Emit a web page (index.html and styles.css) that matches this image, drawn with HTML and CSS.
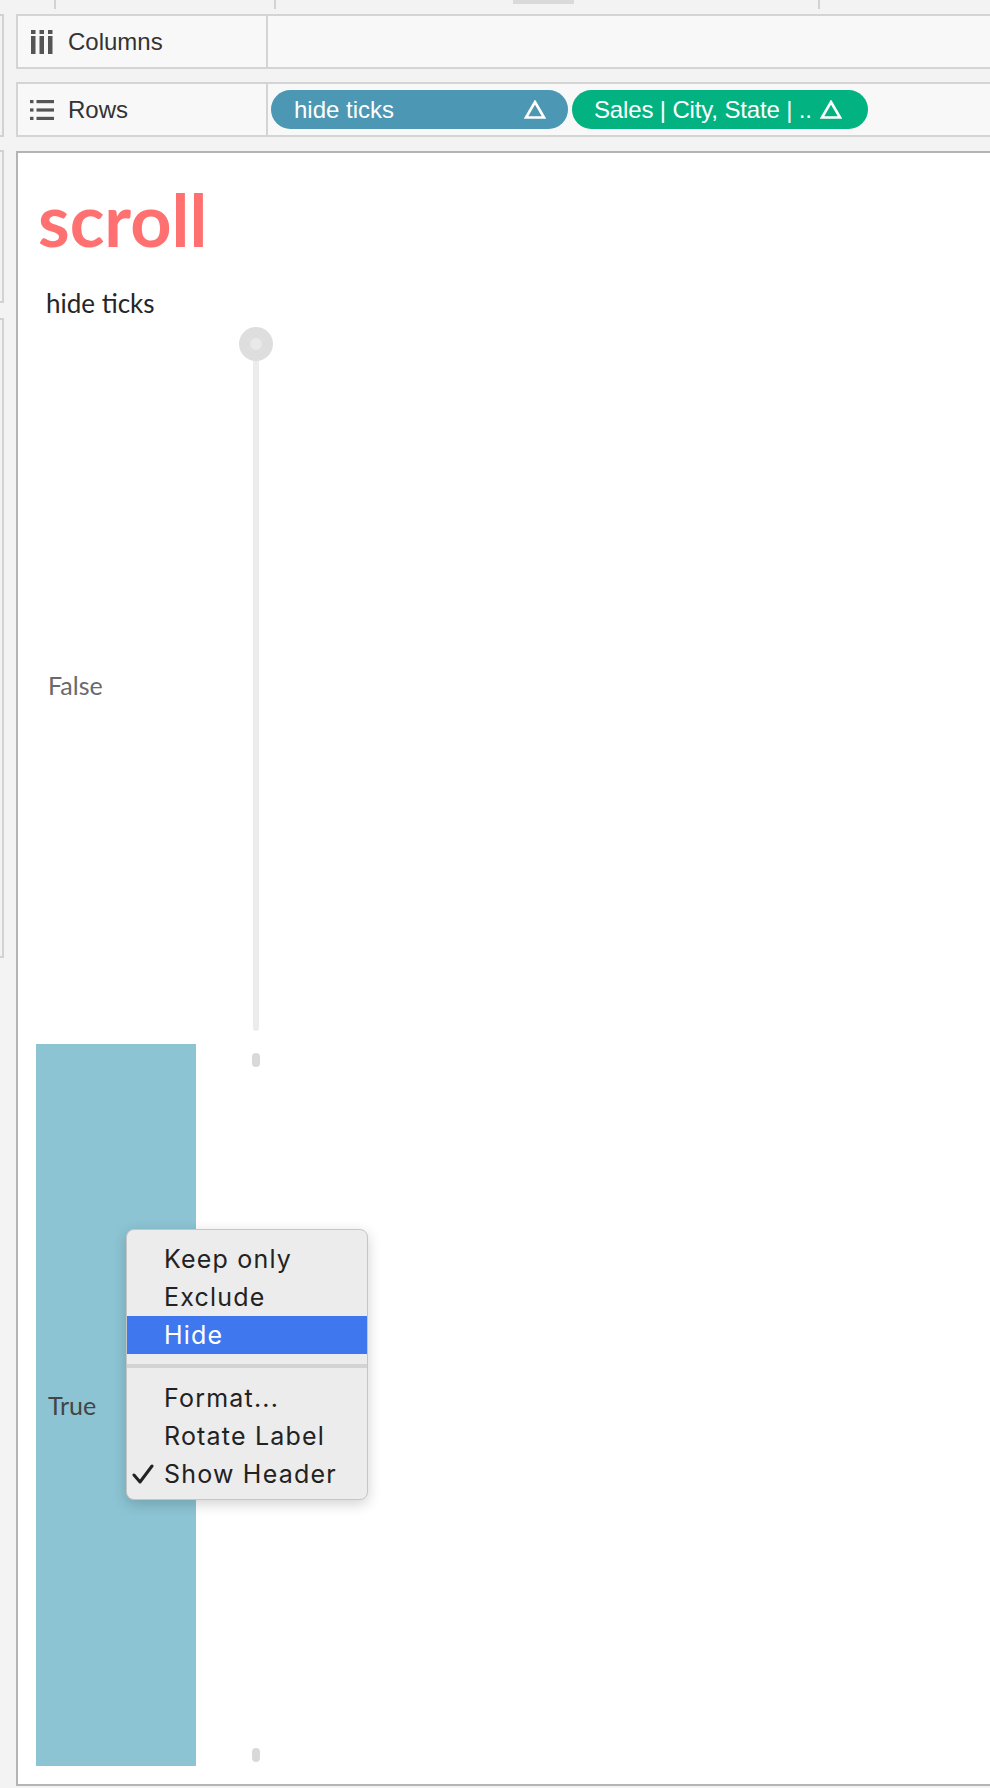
FILE: index.html
```html
<!DOCTYPE html>
<html lang="en">
<head>
<meta charset="utf-8">
<title>Sheet - scroll</title>
<link rel="stylesheet" href="styles.css">
</head>
<body>
<div class="tabstrip">
  <div class="seg seg-a"></div>
  <div class="seg seg-b"></div>
  <div class="seg seg-c"><div class="grip"></div></div>
</div>
<div class="workspace">
  <div class="sidestrip">
    <div class="sidebox box1"></div>
    <div class="sidebox box2"></div>
    <div class="sidebox box3"></div>
  </div>
  <main class="main">
    <div class="shelf">
      <div class="shelf-label">
        <span class="shelf-icon">
          <svg width="22" height="24" viewBox="0 0 22 24"><g fill="#555"><rect x="0" y="0" width="4.5" height="4"/><rect x="0" y="6" width="4.5" height="18"/><rect x="8.5" y="0" width="4.5" height="4"/><rect x="8.5" y="6" width="4.5" height="18"/><rect x="17" y="0" width="4.5" height="4"/><rect x="17" y="6" width="4.5" height="18"/></g></svg>
        </span>
        <span class="shelf-name">Columns</span>
      </div>
      <div class="shelf-pills"></div>
    </div>
    <div class="shelf rows-shelf">
      <div class="shelf-label">
        <span class="shelf-icon">
          <svg width="24" height="20" viewBox="0 0 24 20"><g fill="#555"><rect x="0" y="0" width="3.5" height="3.2"/><rect x="6.5" y="0" width="17.5" height="3.2"/><rect x="0" y="8.4" width="3.5" height="3.2"/><rect x="6.5" y="8.4" width="17.5" height="3.2"/><rect x="0" y="16.8" width="3.5" height="3.2"/><rect x="6.5" y="16.8" width="17.5" height="3.2"/></g></svg>
        </span>
        <span class="shelf-name">Rows</span>
      </div>
      <div class="shelf-pills">
        <div class="pill pill-dim">
          <span class="pill-text">hide ticks</span>
          <svg class="delta" width="22" height="19" viewBox="0 0 22 19"><path d="M11 2 L20 17.5 L2 17.5 Z" fill="none" stroke="#fff" stroke-width="2.6" stroke-linejoin="miter"/></svg>
        </div>
        <div class="pill pill-measure">
          <span class="pill-text">Sales | City, State | ..</span>
          <svg class="delta" width="22" height="19" viewBox="0 0 22 19"><path d="M11 2 L20 17.5 L2 17.5 Z" fill="none" stroke="#fff" stroke-width="2.6" stroke-linejoin="miter"/></svg>
        </div>
      </div>
    </div>
    <section class="view">
      <h1 class="title">scroll</h1>
      <div class="field-header">hide ticks</div>
      <div class="chart">
        <div class="row-header row-false"><span>False</span></div>
        <div class="marks marks-false">
          <div class="knob"><div class="knob-core"></div></div>
          <div class="track"></div>
        </div>
        <div class="row-header row-true selected"><span>True</span></div>
        <div class="marks marks-true">
          <div class="tick"></div>
          <div class="tick"></div>
        </div>
      </div>
    </section>
  </main>
</div>
<div class="context-menu">
  <div class="menu-item"><span class="check"></span>Keep only</div>
  <div class="menu-item"><span class="check"></span>Exclude</div>
  <div class="menu-item active"><span class="check"></span>Hide</div>
  <div class="menu-sep"></div>
  <div class="menu-item"><span class="check"></span>Format...</div>
  <div class="menu-item"><span class="check"></span>Rotate Label</div>
  <div class="menu-item"><span class="check"><svg width="22" height="20" viewBox="0 0 22 20"><path d="M2 11 L8 18 L20 2" fill="none" stroke="#222" stroke-width="3" stroke-linecap="round" stroke-linejoin="round"/></svg></span>Show Header</div>
</div>
</body>
</html>
```
FILE: styles.css
```css
* { box-sizing: border-box; }
html, body { margin: 0; padding: 0; }
body {
  width: 990px;
  height: 1788px;
  overflow: hidden;
  background: #f3f3f3;
  font-family: "Liberation Sans", Arial, sans-serif;
  color: #333;
  position: relative;
}

/* top tab strip */
.tabstrip { display: flex; height: 14px; }
.seg { height: 9px; border-right: 2px solid #d2d2d2; }
.seg-a { width: 56px; }
.seg-b { width: 220px; }
.seg-c { width: 544px; }
.grip { margin-left: 237px; width: 61px; height: 4px; background: #dadada; }

.workspace { display: flex; }

/* left panel edge */
.sidestrip { width: 4px; margin-right: 12px; display: flex; flex-direction: column; flex: none; }
.sidebox { border: 2px solid #d2d2d2; border-left: none; }
.box1 { height: 123px; }
.box2 { margin-top: 13px; height: 153px; }
.box3 { margin-top: 15px; height: 640px; }

.main { flex: 1; display: flex; flex-direction: column; }

/* shelves */
.shelf {
  display: flex;
  height: 55px;
  border: 2px solid #d4d4d4;
  border-right: none;
  background: #f8f8f8;
}
.rows-shelf { margin-top: 13px; }
.shelf-label {
  width: 250px;
  flex: none;
  display: flex;
  align-items: center;
  padding-left: 12px;
  border-right: 2px solid #d4d4d4;
}
.shelf-icon { width: 24px; display: flex; justify-content: center; align-items: center; margin-right: 14px; }
.shelf-name { font-size: 24px; color: #333; }
.shelf-pills { display: flex; align-items: center; gap: 4px; padding-left: 3px; }

.pill {
  height: 39px;
  width: 297px;
  border-radius: 20px;
  display: flex;
  align-items: center;
  color: #fff;
  font-size: 24px;
  white-space: nowrap;
  padding: 0 22px 0 23px;
}
.pill-dim { background: #4b97b4; justify-content: space-between; }
.pill-measure { background: #02b281; width: 296px; padding-left: 22px; letter-spacing: -0.15px; }
.pill-measure .delta { margin-left: 8px; }
.delta { flex: none; }

/* view */
.view {
  margin-top: 14px;
  height: 1635px;
  border: 2px solid #b4b4b4;
  border-right: none;
  background: #fff;
  padding-left: 20px;
}
.title {
  margin: 0;
  font-family: Lato, "Liberation Sans", sans-serif;
  font-weight: 700;
  font-size: 72px;
  line-height: 72px;
  color: #ff7070;
  padding-top: 30px;
  height: 135px;
}
.field-header {
  font-family: Lato, "Liberation Sans", sans-serif;
  font-size: 26px;
  color: #262626;
  line-height: 30px;
  padding-left: 8px;
  height: 37px;
}
.chart {
  display: grid;
  grid-template-columns: 160px 120px;
  grid-template-rows: 719px 722px;
  margin-left: -2px;
}
.row-header {
  display: flex;
  align-items: center;
  padding-left: 12px;
  font-family: Lato, "Liberation Sans", sans-serif;
  font-size: 25px;
  color: #6a6a6a;
}
.row-true { color: #444; }
.selected { background: #8cc4d3; }

.marks { display: flex; flex-direction: column; align-items: center; width: 34px; margin-left: 43px; }
.marks-false { padding-top: 2px; }
.knob {
  width: 34px; height: 34px; border-radius: 50%;
  background: #dedede;
  display: flex; align-items: center; justify-content: center;
  flex: none;
}
.knob-core { width: 12px; height: 12px; border-radius: 50%; background: #e9e9e9; }
.track { width: 6px; height: 670px; background: #ececec; border-radius: 0 0 3px 3px; }
.marks-true { justify-content: space-between; padding: 9px 0 4px; }
.tick { width: 8px; height: 14px; border-radius: 4px; background: #d9d9d9; }

/* context menu */
.context-menu {
  position: absolute;
  left: 126px;
  top: 1229px;
  width: 242px;
  padding: 10px 0 6px;
  background: #ececec;
  border: 1px solid #c6c6c6;
  border-radius: 8px;
  box-shadow: 0 4px 14px rgba(0, 0, 0, 0.18);
  font-family: Inter, "Liberation Sans", sans-serif;
  font-size: 25px;
  letter-spacing: 1.2px;
  color: #222;
}
.menu-item { height: 38px; display: flex; align-items: center; }
.menu-item.active { background: #3f78ee; color: #fff; }
.check { width: 37px; flex: none; display: flex; padding-left: 5px; }
.menu-sep { height: 25px; padding-top: 10px; }
.menu-sep::before { content: ""; display: block; height: 4px; background: #d3d3d3; }
```
